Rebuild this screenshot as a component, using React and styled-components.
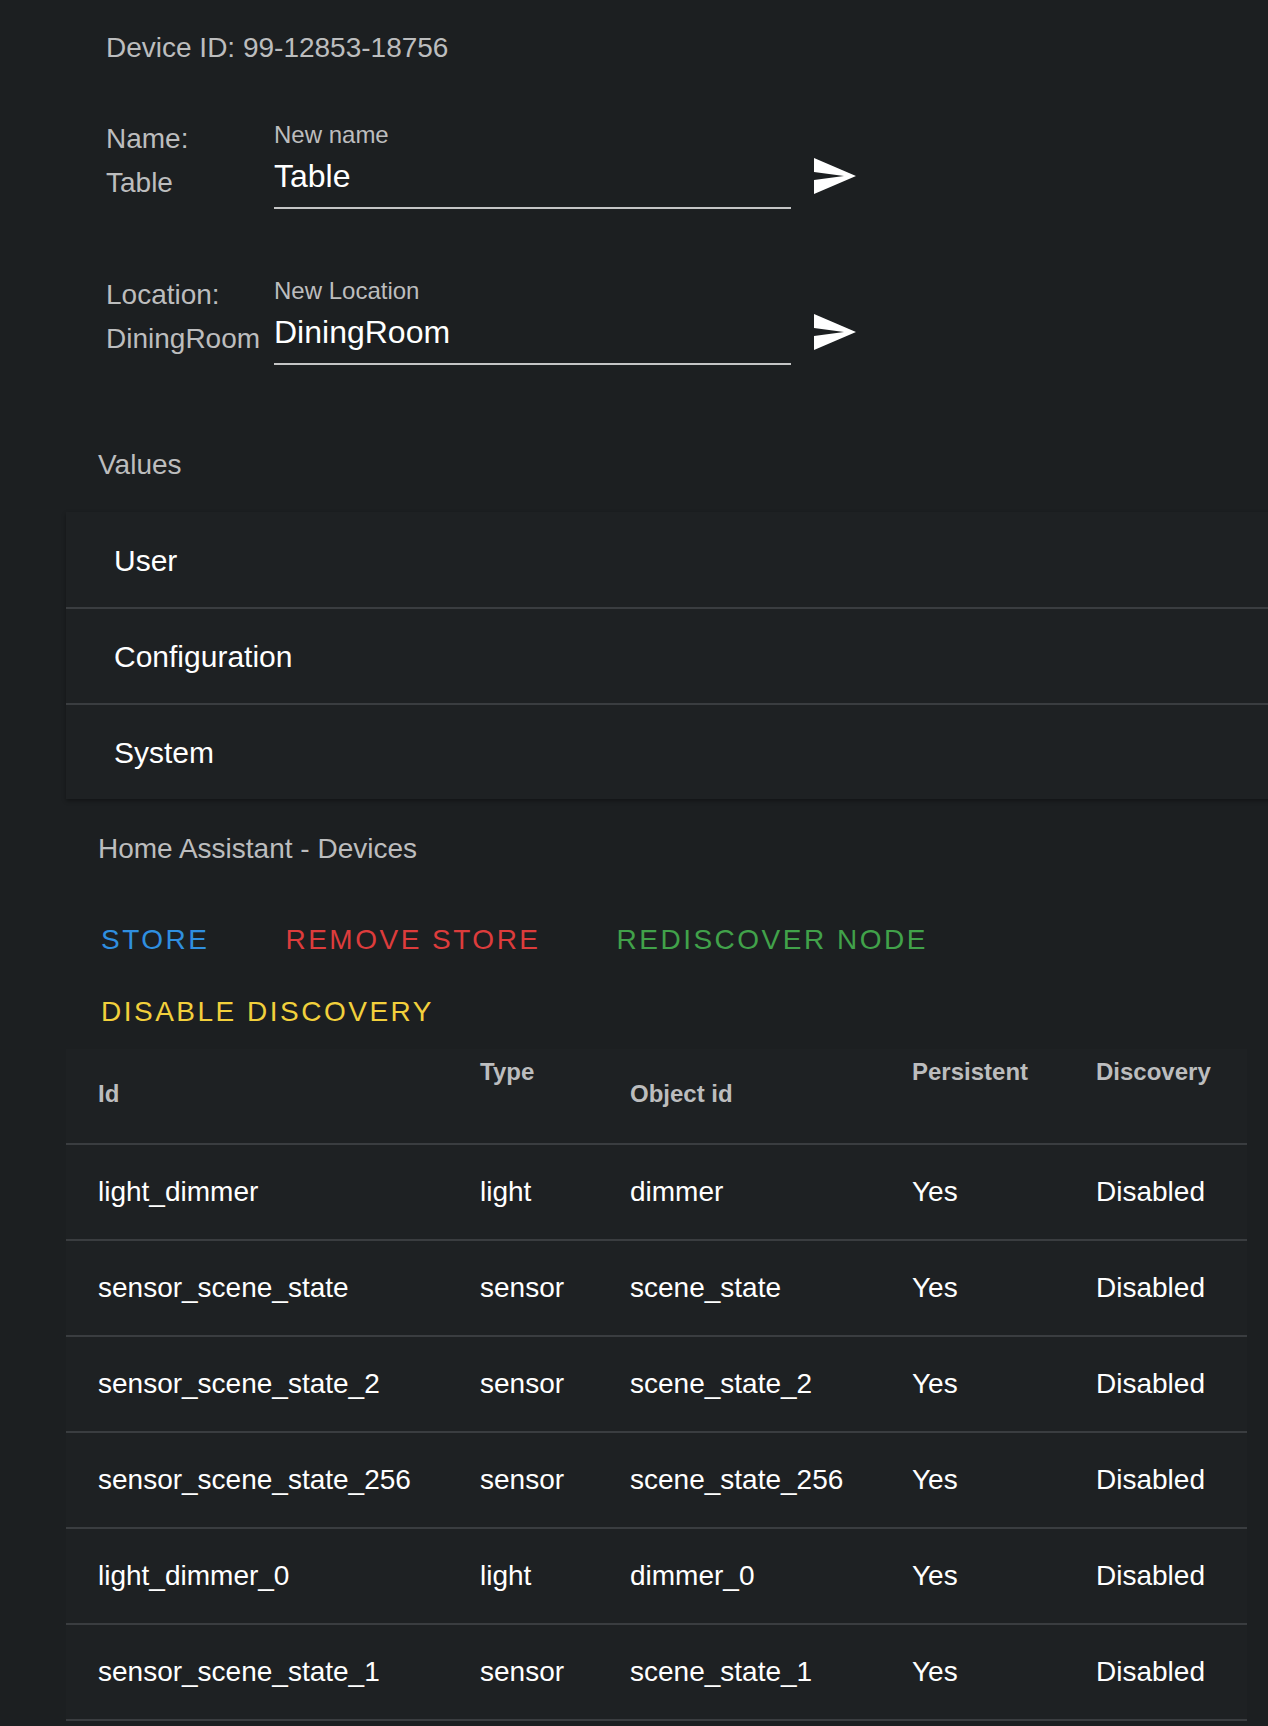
import React from 'react';
import styled, { createGlobalStyle } from 'styled-components';

const GlobalStyle = createGlobalStyle`
  body {
    margin: 0;
    background-color: #1c1f21;
    font-family: 'Liberation Sans', Arial, sans-serif;
    overflow-x: hidden;
  }
`;

const Page = styled.div`
  padding-top: 28px;
  min-height: 1726px;
  box-sizing: border-box;
  color: #ffffff;
`;

const DeviceId = styled.div`
  margin-left: 106px;
  font-size: 28px;
  line-height: 40px;
  color: #bcbdbe;
`;

const FieldRow = styled.div`
  display: flex;
  align-items: flex-start;
  margin-left: 106px;
  margin-top: ${props => props.$top}px;
`;

const Labels = styled.div`
  width: 168px;
  padding-top: 4px;
  font-size: 28px;
  line-height: 44px;
  color: #bcbdbe;
  white-space: nowrap;
`;

const Field = styled.div`
  width: 517px;
  padding-bottom: 11px;
  border-bottom: 2px solid #c4c5c6;
`;

const FieldLabel = styled.div`
  margin-top: 6px;
  font-size: 24px;
  line-height: 32px;
  color: #bcbdbe;
`;

const FieldInput = styled.input`
  display: block;
  margin-top: 5px;
  width: 100%;
  height: 40px;
  padding: 0;
  border: none;
  outline: none;
  background: transparent;
  font-family: inherit;
  font-size: 32px;
  line-height: 40px;
  color: #ffffff;
`;

const SendButton = styled.button`
  margin-left: 19px;
  margin-top: 39px;
  width: 48px;
  height: 48px;
  padding: 0;
  border: none;
  background: none;
  cursor: pointer;

  svg {
    display: block;
    width: 48px;
    height: 48px;
  }
`;

const SectionTitle = styled.div`
  margin-left: 98px;
  margin-top: ${props => props.$top}px;
  font-size: 28px;
  line-height: 40px;
  color: #bcbdbe;
`;

const Accordion = styled.div`
  margin-top: 27px;
  margin-left: 66px;
  margin-right: -40px;
  background-color: #1e2123;
  box-shadow: 0 2px 4px rgba(0, 0, 0, 0.35);
`;

const AccordionRow = styled.div`
  display: flex;
  align-items: center;
  box-sizing: border-box;
  height: ${props => props.$height}px;
  padding: 2px 0 0 48px;
  font-size: 30px;
  color: #ffffff;
  border-bottom: ${props => (props.$last ? 'none' : '2px solid #3a3d40')};
`;

const ButtonBar = styled.div`
  display: flex;
  flex-wrap: wrap;
  column-gap: 76px;
  margin-top: 36px;
  padding-left: 101px;
`;

const ActionButton = styled.button`
  padding: 15px 0 17px;
  border: none;
  background: none;
  font-family: inherit;
  font-size: 28px;
  line-height: 40px;
  letter-spacing: 2.5px;
  text-transform: uppercase;
  color: ${props => props.$color};
  cursor: pointer;
`;

const TablePaper = styled.div`
  width: 1181px;
  margin-left: 66px;
  background-color: #1e2123;
`;

const gridColumns = '382px 150px 282px 184px 1fr';

const HeaderRow = styled.div`
  display: grid;
  grid-template-columns: ${gridColumns};
  padding: 1px 0 5px;
  border-bottom: 2px solid #3a3d40;
  min-height: 88px;
`;

const HeaderCell = styled.div`
  align-self: center;
  padding-left: 32px;
  padding-bottom: ${props => (props.$wrapped ? '44px' : '0')};
  font-size: 24px;
  font-weight: 700;
  line-height: 44px;
  color: #bcbdbe;
`;

const BodyRow = styled.div`
  display: grid;
  grid-template-columns: ${gridColumns};
  align-items: center;
  box-sizing: border-box;
  height: 96px;
  border-bottom: 2px solid #3a3d40;
`;

const Cell = styled.div`
  padding-left: 32px;
  font-size: 28px;
  line-height: 40px;
  color: #ffffff;
  white-space: nowrap;
`;

const SendIcon = () => (
  <svg viewBox="0 0 24 24">
    <path d="M2.01 21 23 12 2.01 3 2 10l15 2-15 2z" fill="#ffffff" />
  </svg>
);

const fields = [
  { label: 'Name:', current: 'Table', hint: 'New name', top: 45 },
  { label: 'Location:', current: 'DiningRoom', hint: 'New Location', top: 60 },
];

const sections = [
  { name: 'User', height: 97 },
  { name: 'Configuration', height: 96 },
  { name: 'System', height: 94, last: true },
];

const actions = [
  { text: 'Store', color: '#2f8fe0' },
  { text: 'Remove Store', color: '#dd3c3c' },
  { text: 'Rediscover Node', color: '#41a24a' },
  { text: 'Disable Discovery', color: '#f2d03c' },
];

const columns = [
  { title: 'Id' },
  { title: 'Type', wrapped: true },
  { title: 'Object id' },
  { title: 'Persistent', wrapped: true },
  { title: 'Discovery', wrapped: true },
];

const devices = [
  ['light_dimmer', 'light', 'dimmer'],
  ['sensor_scene_state', 'sensor', 'scene_state'],
  ['sensor_scene_state_2', 'sensor', 'scene_state_2'],
  ['sensor_scene_state_256', 'sensor', 'scene_state_256'],
  ['light_dimmer_0', 'light', 'dimmer_0'],
  ['sensor_scene_state_1', 'sensor', 'scene_state_1'],
];

const App = () => {
  return (
    <Page>
      <GlobalStyle />
      <DeviceId>Device ID: 99-12853-18756</DeviceId>

      {fields.map((f) => (
        <FieldRow key={f.label} $top={f.top}>
          <Labels>
            <div>{f.label}</div>
            <div>{f.current}</div>
          </Labels>
          <Field>
            <FieldLabel>{f.hint}</FieldLabel>
            <FieldInput defaultValue={f.current} />
          </Field>
          <SendButton aria-label="send">
            <SendIcon />
          </SendButton>
        </FieldRow>
      ))}

      <SectionTitle $top={80}>Values</SectionTitle>
      <Accordion>
        {sections.map((s) => (
          <AccordionRow key={s.name} $height={s.height} $last={s.last}>
            {s.name}
          </AccordionRow>
        ))}
      </Accordion>

      <SectionTitle $top={30}>Home Assistant - Devices</SectionTitle>
      <ButtonBar>
        {actions.map((a) => (
          <ActionButton key={a.text} $color={a.color}>
            {a.text}
          </ActionButton>
        ))}
      </ButtonBar>

      <TablePaper>
        <HeaderRow>
          {columns.map((c) => (
            <HeaderCell key={c.title} $wrapped={c.wrapped}>
              {c.title}
            </HeaderCell>
          ))}
        </HeaderRow>
        {devices.map(([id, type, objectId]) => (
          <BodyRow key={id}>
            <Cell>{id}</Cell>
            <Cell>{type}</Cell>
            <Cell>{objectId}</Cell>
            <Cell>Yes</Cell>
            <Cell>Disabled</Cell>
          </BodyRow>
        ))}
      </TablePaper>
    </Page>
  );
};

export default App;
